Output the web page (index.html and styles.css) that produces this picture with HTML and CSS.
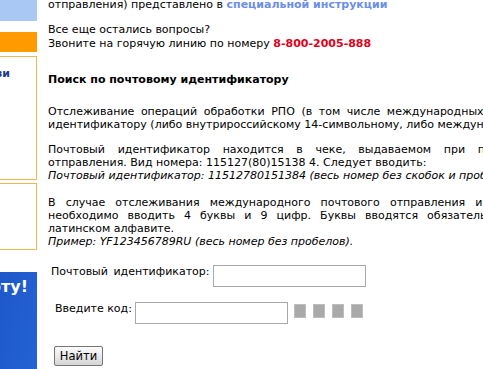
FILE: index.html
```html
<!DOCTYPE html>
<html lang="ru">
<head>
<meta charset="utf-8">
<title>Поиск по почтовому идентификатору</title>
<link rel="stylesheet" href="styles.css">
</head>
<body>
<div class="page">
  <aside class="side">
    <div class="side-top"></div>
    <div class="side-orange"></div>
    <div class="side-box side-box1"><span class="side-link">Отделения связи</span></div>
    <div class="side-box side-box2"></div>
    <div class="side-promo"><span>Приглашаем на работу!</span></div>
  </aside>
  <main class="content">
    <p class="p-top">отправления) представлено в <a class="link" href="#">специальной инструкции</a></p>
    <p class="p-help">Все еще остались вопросы?<br>Звоните на горячую линию по номеру <b class="phone">8-800-2005-888</b></p>
    <h2 class="title">Поиск по почтовому идентификатору</h2>
    <p class="jp p1">Отслеживание операций обработки РПО (в том числе международных) осуществляется по почтовому идентификатору (либо внутрироссийскому 14-символьному, либо международному 13-символьному).</p>
    <p class="jp p2">Почтовый идентификатор находится в чеке, выдаваемом при приеме отправления. Вид номера: 115127(80)15138 4. Следует вводить:<br><i class="note">Почтовый идентификатор: 11512780151384 (весь номер без скобок и пробелов).</i></p>
    <p class="jp p3">В случае отслеживания международного почтового отправления и EMS необходимо вводить 4 буквы и 9 цифр. Буквы вводятся обязательно в латинском алфавите.<br><i class="note">Пример: YF123456789RU (весь номер без пробелов).</i></p>
    <form class="form" action="#">
      <div class="row row1">
        <label class="lbl lbl1" for="barcode">Почтовый идентификатор:</label>
        <input class="field" id="barcode" type="text">
      </div>
      <div class="row row2">
        <label class="lbl lbl2" for="code">Введите код:</label>
        <input class="field" id="code" type="text">
        <div class="captcha"><span class="cell"></span><span class="cell"></span><span class="cell"></span><span class="cell"></span></div>
      </div>
      <button class="btn" type="button">Найти</button>
    </form>
  </main>
</div>
</body>
</html>
```

FILE: styles.css
```css
html, body {
  margin: 0;
  padding: 0;
  overflow: hidden;
  background: #fff;
}
body {
  font-family: "DejaVu Sans", Verdana, sans-serif;
  font-size: 11px;
  line-height: 13px;
  color: #000;
}
.page {
  display: flex;
  align-items: flex-start;
  gap: 11px;
  margin-top: -2px;
}
.side {
  flex: none;
  width: 300px;
  margin-left: -263px;
  display: flex;
  flex-direction: column;
}
.side-top {
  height: 23px;
  background: #a9c8f4;
}
.side-orange {
  height: 20px;
  margin-top: 11px;
  background: #ff9a00;
}
.side-box {
  box-sizing: border-box;
  border: 1px solid #f2b84e;
  background: #fff;
}
.side-box1 {
  height: 124px;
  margin-top: 4px;
  padding: 10px 26px 0 0;
  text-align: right;
  white-space: nowrap;
}
.side-link {
  font-weight: bold;
  color: #1b3c8c;
}
.side-box2 {
  height: 67px;
  margin-top: 3px;
}
.side-promo {
  height: 110px;
  margin-top: 22px;
  padding: 5px 9px 0 0;
  text-align: right;
  white-space: nowrap;
  background: linear-gradient(100deg, #0a3594 0%, #134ab8 55%, #2462d4 100%);
}
.side-promo span {
  font-weight: bold;
  font-size: 16px;
  line-height: 20px;
  color: #fff;
}
.content {
  flex: none;
  width: 640px;
}
.content p, .title {
  margin: 0;
}
.p-top {
  white-space: nowrap;
}
.link {
  color: #6b8ee8;
  font-weight: bold;
  text-decoration: none;
}
.p-help {
  margin-top: 12px !important;
  line-height: 14px;
}
.phone {
  color: #e1001a;
}
.title {
  margin-top: 22px !important;
  font-size: 11px;
  font-weight: bold;
}
.jp {
  text-align: justify;
}
.note {
  white-space: nowrap;
}
.p1 { margin-top: 19px !important; width: 630px; }
.p2 { margin-top: 12px !important; width: 473px; }
.p3 { margin-top: 14px !important; width: 468px; }
.form {
  margin: 17px 0 0;
  display: flex;
  flex-direction: column;
  align-items: flex-start;
}
.row {
  display: flex;
  align-items: flex-start;
}
.row2 {
  margin-top: 15px;
}
.lbl {
  flex: none;
  box-sizing: border-box;
  font-size: 11px;
  line-height: 14px;
  margin-top: 0;
  white-space: nowrap;
}
.lbl1 {
  width: 165px;
  padding-left: 3px;
  word-spacing: 2px;
}
.lbl2 {
  width: 87px;
  padding-left: 7px;
}
.field {
  flex: none;
  box-sizing: border-box;
  width: 153px;
  height: 22px;
  margin: 0;
  border: 1px solid #a9a9a9;
  background: #fff;
  padding: 0 3px;
}
.captcha {
  display: flex;
  gap: 7px;
  margin: 2px 0 0 6px;
}
.cell {
  box-sizing: border-box;
  width: 12px;
  height: 14px;
  background: #a9a9a9;
  border: 1px solid #bdbdbd;
}
.btn {
  margin: 22px 0 0 6px;
  box-sizing: border-box;
  width: 49px;
  height: 20px;
  padding: 0;
  border: 1px solid #767676;
  border-radius: 2px;
  background: linear-gradient(#fbfbfb, #e2e2e2 70%, #d4d4d4);
  font-family: "DejaVu Sans", Verdana, sans-serif;
  font-size: 11.5px;
  line-height: 18px;
  color: #000;
}
```
